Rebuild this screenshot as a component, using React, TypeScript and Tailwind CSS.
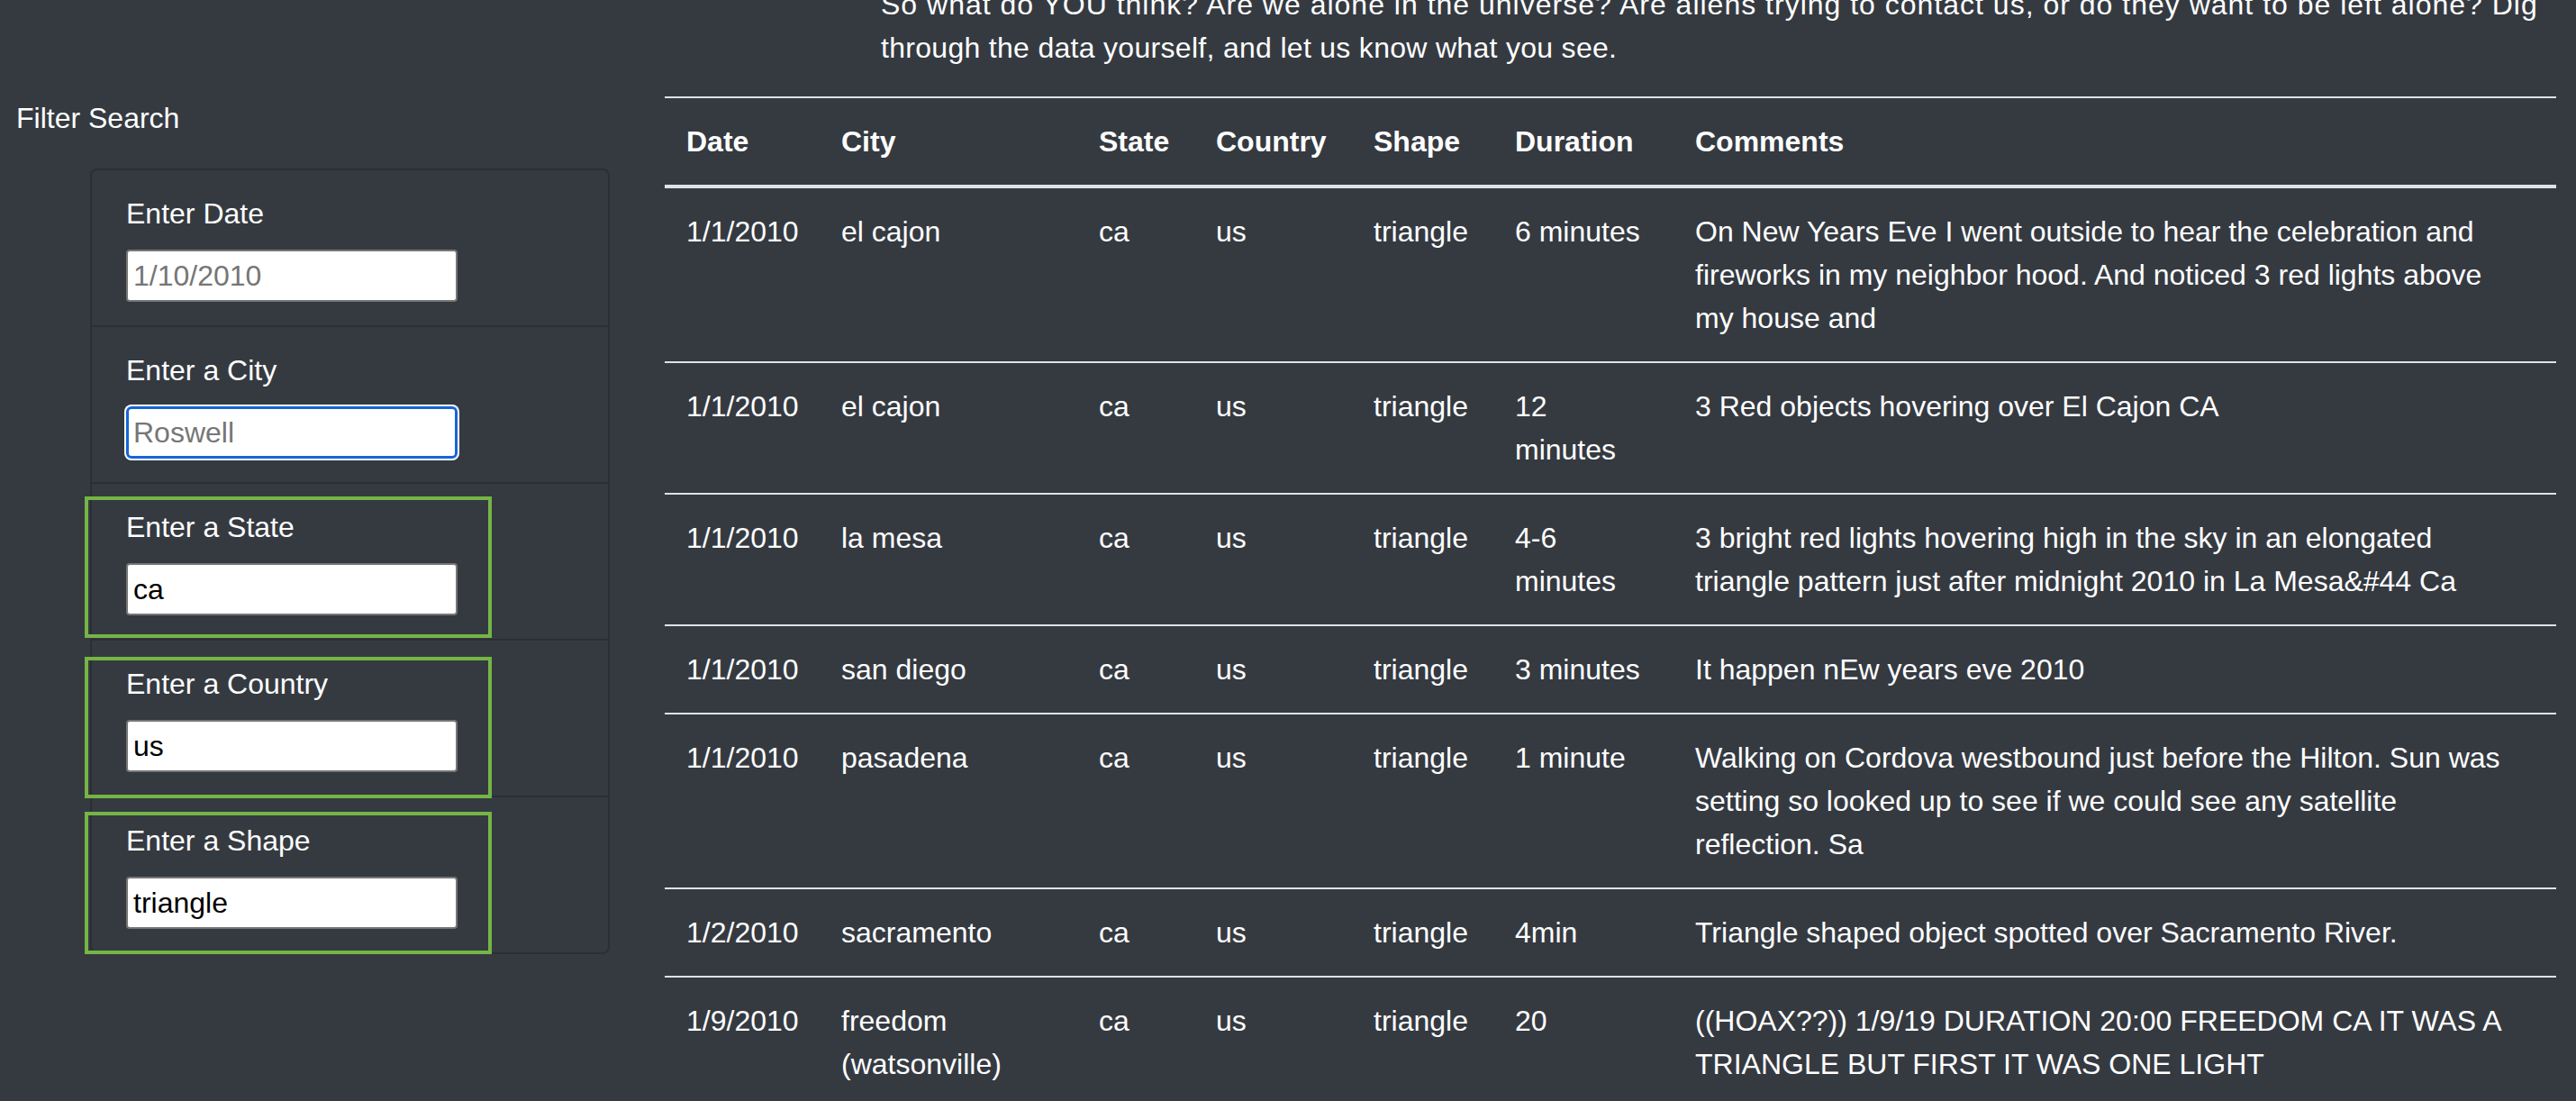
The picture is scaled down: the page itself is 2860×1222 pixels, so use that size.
import React from "react";

interface Sighting {
  date: string;
  city: string;
  state: string;
  country: string;
  shape: string;
  duration: string;
  comments: string;
}

const sightings: Sighting[] = [
  {
    date: "1/1/2010",
    city: "el cajon",
    state: "ca",
    country: "us",
    shape: "triangle",
    duration: "6 minutes",
    comments:
      "On New Years Eve I went outside to hear the celebration and fireworks in my neighbor hood. And noticed 3 red lights above my house and",
  },
  {
    date: "1/1/2010",
    city: "el cajon",
    state: "ca",
    country: "us",
    shape: "triangle",
    duration: "12 minutes",
    comments: "3 Red objects hovering over El Cajon CA",
  },
  {
    date: "1/1/2010",
    city: "la mesa",
    state: "ca",
    country: "us",
    shape: "triangle",
    duration: "4-6 minutes",
    comments:
      "3 bright red lights hovering high in the sky in an elongated triangle pattern just after midnight 2010 in La Mesa&#44 Ca",
  },
  {
    date: "1/1/2010",
    city: "san diego",
    state: "ca",
    country: "us",
    shape: "triangle",
    duration: "3 minutes",
    comments: "It happen nEw years eve 2010",
  },
  {
    date: "1/1/2010",
    city: "pasadena",
    state: "ca",
    country: "us",
    shape: "triangle",
    duration: "1 minute",
    comments:
      "Walking on Cordova westbound just before the Hilton. Sun was setting so looked up to see if we could see any satellite reflection. Sa",
  },
  {
    date: "1/2/2010",
    city: "sacramento",
    state: "ca",
    country: "us",
    shape: "triangle",
    duration: "4min",
    comments: "Triangle shaped object spotted over Sacramento River.",
  },
  {
    date: "1/9/2010",
    city: "freedom (watsonville)",
    state: "ca",
    country: "us",
    shape: "triangle",
    duration: "20",
    comments:
      "((HOAX??)) 1/9/19 DURATION 20:00 FREEDOM CA IT WAS A TRIANGLE BUT FIRST IT WAS ONE LIGHT",
  },
];

interface FilterField {
  label: string;
  value: string;
  placeholder: string;
  focused?: boolean;
  boxClass: string;
}

// the green outlines mark the fields that currently hold a filter value
const filters: FilterField[] = [
  {
    label: "Enter Date",
    value: "",
    placeholder: "1/10/2010",
    boxClass: "pt-[14px]",
  },
  {
    label: "Enter a City",
    value: "",
    placeholder: "Roswell",
    focused: true,
    boxClass: "pt-[14px]",
  },
  {
    label: "Enter a State",
    value: "ca",
    placeholder: "",
    boxClass: "pt-[14px]",
  },
  {
    label: "Enter a Country",
    value: "us",
    placeholder: "",
    boxClass: "pt-[18px]",
  },
  {
    label: "Enter a Shape",
    value: "triangle",
    placeholder: "",
    boxClass: "pt-[16px]",
  },
];

const innerPad: Record<string, string> = {
  "Enter Date": "pt-[6px] pb-[22px] border-transparent",
  "Enter a City": "pt-[6px] pb-[22px] border-transparent",
  "Enter a State": "pt-[6px] pb-[21px] border-[#74b544]",
  "Enter a Country": "pt-[2px] pb-[25px] border-[#74b544]",
  "Enter a Shape": "pt-[4px] pb-[24px] border-[#74b544]",
};

const columns = [
  { name: "Date", width: "w-[172px]" },
  { name: "City", width: "w-[286px]" },
  { name: "State", width: "w-[130px]" },
  { name: "Country", width: "w-[175px]" },
  { name: "Shape", width: "w-[157px]" },
  { name: "Duration", width: "w-[200px]" },
  { name: "Comments", width: "w-[980px]" },
];

const FilterCard: React.FC = () => (
  <ul className="ml-[100px] w-[577px] border-2 border-[#2b2f35] rounded-[8px]">
    {filters.map((f, i) => (
      <li
        key={f.label}
        className={
          i < filters.length - 1
            ? `flow-root h-[174px] border-b-2 border-[#2b2f35] ${f.boxClass}`
            : `flow-root h-[172px] ${f.boxClass}`
        }
      >
        <div
          className={`ml-[-8px] w-[452px] border-4 pl-[42px] ${innerPad[f.label]}`}
        >
          <label className="block leading-[48px] text-[32px] text-white">
            {f.label}
          </label>
          <input
            type="text"
            defaultValue={f.value}
            placeholder={f.placeholder}
            className={
              f.focused
                ? "mt-[16px] block w-[368px] h-[58px] bg-white text-black text-[32px] px-[5px] rounded-[6px] border-[3px] border-[#1565d8] shadow-[0_0_0_2px_#ffffff] outline-none placeholder:text-[#767676]"
                : "mt-[16px] block w-[368px] h-[58px] bg-white text-black text-[32px] px-[6px] rounded-[4px] border-2 border-[#767676] outline-none placeholder:text-[#767676]"
            }
          />
        </div>
      </li>
    ))}
  </ul>
);

const SightingsTable: React.FC = () => (
  <table className="w-[2100px] table-fixed border-collapse text-white text-[32px] leading-[48px]">
    <thead>
      <tr>
        {columns.map((c) => (
          <th
            key={c.name}
            className={`${c.width} text-left font-bold align-bottom p-[24px] border-t-2 border-b-4 border-[#dee2e6]`}
          >
            {c.name}
          </th>
        ))}
      </tr>
    </thead>
    <tbody>
      {sightings.map((s, i) => (
        <tr key={i}>
          {[s.date, s.city, s.state, s.country, s.shape, s.duration].map(
            (v, j) => (
              <td
                key={j}
                className="align-top p-[24px] border-t-2 border-[#dee2e6] font-normal"
              >
                {v}
              </td>
            )
          )}
          <td className="align-top py-[24px] pl-[24px] pr-[50px] border-t-2 border-[#dee2e6] font-normal">
            {s.comments}
          </td>
        </tr>
      ))}
    </tbody>
  </table>
);

export default function App() {
  return (
    <div
      className="h-[1222px] w-[2860px] overflow-hidden bg-[#353a41] text-white"
      style={{ fontFamily: '"Liberation Sans", Arial, sans-serif' }}
    >
      <p className="ml-[978px] mt-[-19px] mb-[30px] text-[32px] leading-[48px] whitespace-nowrap">
        <span className="tracking-[1px]">
          So what do YOU think? Are we alone in the universe? Are aliens
          trying to contact us, or do they want to be left alone? Dig
        </span>
        <br />
        <span className="tracking-[0.3px]">
          through the data yourself, and let us know what you see.
        </span>
      </p>
      <div className="flex">
        <aside className="w-[738px] shrink-0">
          <h5 className="pl-[18px] text-[32px] leading-[48px] font-normal">
            Filter Search
          </h5>
          <div className="mt-[32px]">
            <FilterCard />
          </div>
        </aside>
        <main className="shrink-0">
          <SightingsTable />
        </main>
      </div>
    </div>
  );
}
